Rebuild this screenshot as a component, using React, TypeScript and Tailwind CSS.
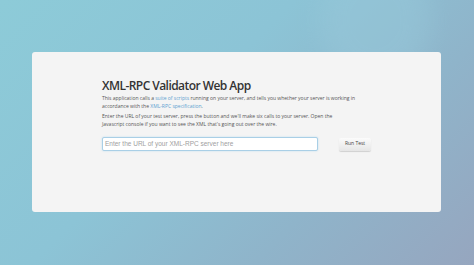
export default function App() {
  return (
    <div className="relative w-[474px] h-[265px] overflow-hidden bg-[linear-gradient(135deg,#8dcbd8_0%,#8cc4d6_40%,#8fb4ca_70%,#96a6bf_100%)] pt-[52px] pl-[32px]">
      <div className="pointer-events-none absolute left-[320px] top-[-40px] h-[120px] w-[110px] rounded-full bg-[#9acbdc] opacity-40 blur-[12px]" />
      <div className="relative w-[409px] h-[160px] rounded-[3px] bg-[#f4f4f4] pl-[70px] pt-[25px]" style={{ fontFamily: '"Open Sans", "Noto Sans", sans-serif' }}>
        <h1 className="text-[12px] leading-[17px] font-semibold text-[#333] tracking-[-0.55px]">XML-RPC Validator Web App</h1>
        <p className="mt-[1px] w-[275px] text-[5px] leading-[7.5px] text-[#555]">
          This application calls a <span className="text-[#5b9fd0]">suite of scripts</span> running on your server, and tells you whether your server is working in accordance with the <span className="text-[#5b9fd0]">XML-RPC specification</span>.
        </p>
        <p className="mt-[3px] w-[248px] text-[5px] leading-[7.5px] text-[#555]">
          Enter the URL of your test server, press the button and we'll make six calls to your server. Open the Javascript console if you want to see the XML that's going out over the wire.
        </p>
        <div className="mt-[9px] flex items-center">
          <div className="flex h-[14px] w-[216px] items-center rounded-[2px] border border-[#a9cfe6] bg-white pl-[2px] shadow-[0_0_2px_#bcdcee]">
            <span className="text-[6.5px] text-[#a0a0a0]" style={{ fontFamily: '"Liberation Sans", Arial, sans-serif' }}>Enter the URL of your XML-RPC server here</span>
          </div>
          <div className="ml-[21px] flex h-[13px] w-[32px] items-center justify-center rounded-[2px] bg-[linear-gradient(#fbfbfb,#e6e6e6)] shadow-[0_1px_1px_rgba(0,0,0,0.15)]">
            <span className="text-[5px] text-[#444]">Run Test</span>
          </div>
        </div>
      </div>
    </div>
  );
}
